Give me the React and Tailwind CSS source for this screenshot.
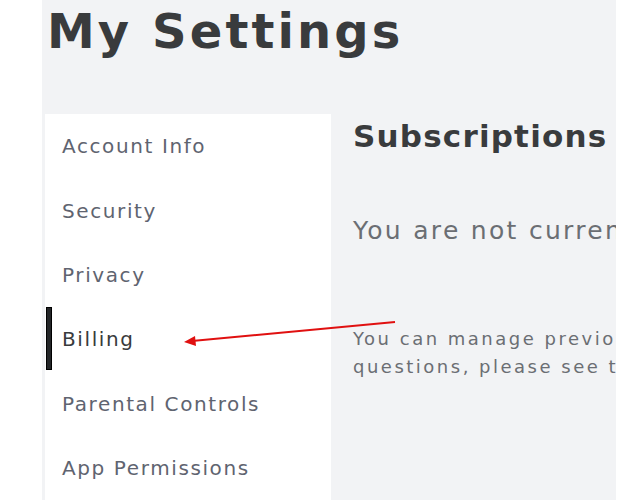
import React from 'react';

const navItems = [
  'Account Info',
  'Security',
  'Privacy',
  'Billing',
  'Parental Controls',
  'App Permissions',
];

const font = { fontFamily: '"DejaVu Sans", "Open Sans", sans-serif' };

const App = () => {
  const active = 'Billing';

  return (
    <div className="w-[640px] h-[500px] bg-white overflow-hidden relative" style={font}>
      <div className="ml-[42px] w-[574px] h-[500px] bg-[#f2f3f5] overflow-hidden">
        <h1 className="pl-[5px] pt-[3px] text-[48px] leading-[56px] font-bold text-[#393b3d] tracking-[3.1px]">
          My Settings
        </h1>

        <div className="flex mt-[55px]">
          {/* sidebar */}
          <div className="ml-[3px] w-[286px] h-[400px] bg-white shrink-0">
            {navItems.map((item) => (
              <div
                key={item}
                className={`relative h-[64.4px] flex items-center pl-[17px] text-[20px] tracking-[1.6px] ${
                  item === active ? 'text-[#393b3d]' : 'text-[#5f6470]'
                }`}
              >
                {item === active && (
                  <span className="absolute left-[1px] top-0 w-[6px] h-[63px] bg-[#232527] border border-black"></span>
                )}
                {item}
              </div>
            ))}
          </div>

          {/* content */}
          <div className="flex-1 pl-[22px] whitespace-nowrap overflow-hidden">
            <h2 className="mt-[4px] text-[31px] leading-[36px] font-bold text-[#393b3d] tracking-[1.2px]">
              Subscriptions
            </h2>
            <p className="mt-[61px] text-[25px] leading-[32px] text-[#6b6e73] tracking-[2.3px]">
              You are not currently subscribed.
            </p>
            <p className="mt-[78px] text-[18px] leading-[28px] text-[#6b6e73] tracking-[2.5px]">
              You can manage previous purchases here.
              <br />
              questions, please see the Help page.
            </p>
          </div>
        </div>
      </div>

      {/* annotation arrow */}
      <svg className="absolute left-0 top-0" width="640" height="500">
        <line x1="395" y1="322" x2="192" y2="341" stroke="#e01010" strokeWidth="2" />
        <polygon points="184,342 195,336 196,346" fill="#e01010" />
      </svg>
    </div>
  );
};

export default App;
